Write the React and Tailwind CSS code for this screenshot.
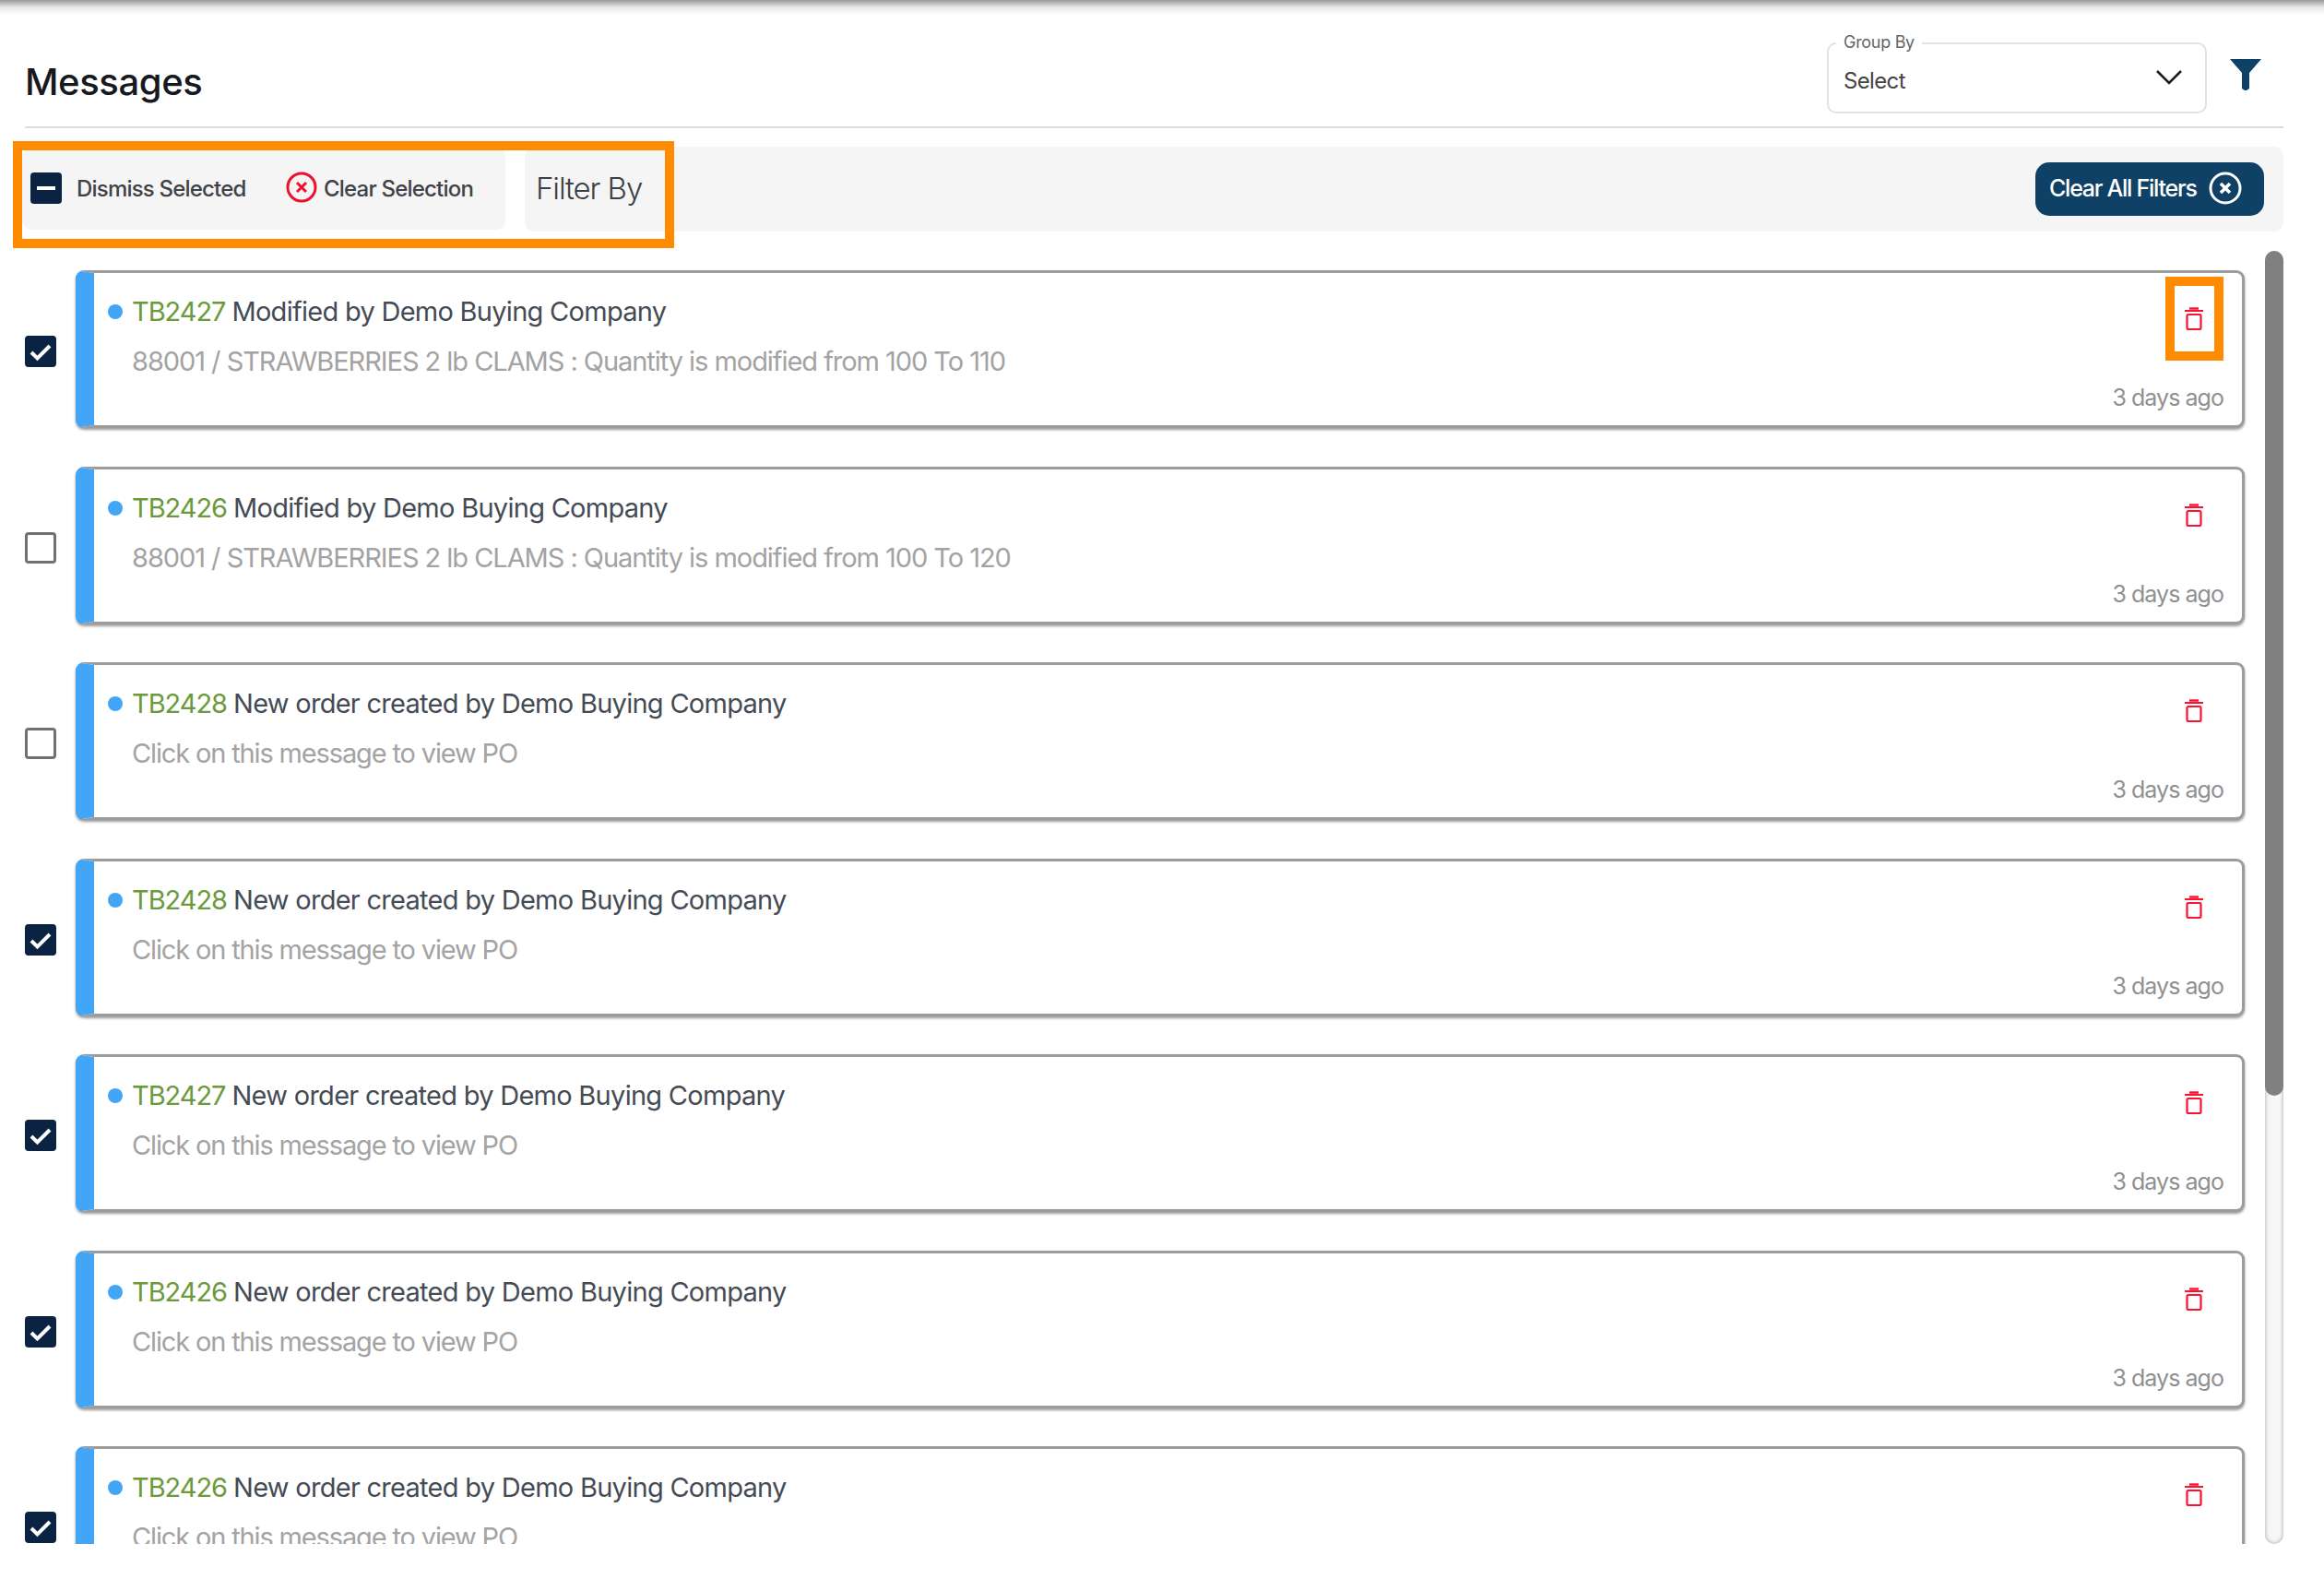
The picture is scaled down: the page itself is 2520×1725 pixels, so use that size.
import React from "react";

function CheckBox({ checked }) {
  if (!checked) {
    return <span className="block w-[34px] h-[34px] rounded-[4px] border-[3px] border-[#707070] bg-white shrink-0 mt-[5px]" />;
  }
  return (
    <span className="flex items-center justify-center w-[34px] h-[34px] rounded-[4px] bg-[#0a2342] shrink-0 mt-[5px]">
      <svg width="28" height="28" viewBox="0 0 28 28" fill="none">
        <path d="M4 15l6.5 6.5L24 8" stroke="#fff" strokeWidth="4" />
      </svg>
    </span>
  );
}

function Trash() {
  return (
    <svg width="20" height="25" viewBox="0 0 20 25" fill="none" className="block">
      <path d="M0 4h20" stroke="#ff1030" strokeWidth="2" />
      <path d="M5 1.5h10" stroke="#ff1030" strokeWidth="2.4" />
      <rect x="2.5" y="8" width="15" height="16" rx="1.5" stroke="#ff1030" strokeWidth="2.2" />
    </svg>
  );
}

function Card({ id, action, sub, mark }) {
  const isClick = sub.startsWith("Click");
  return (
    <div className="relative flex h-[171px] w-[2352px] rounded-[9px] border-[3px] border-l-[20px] border-[#9c9c9c] border-l-[#42a5f5] bg-white shadow-[0_2px_3px_rgba(0,0,0,0.4)]">
      <div className="flex-1 pl-[15px] pt-[22px]">
        <div className="flex items-center h-[40px] text-[29px] text-[#444b55]">
          <span className="w-[16px] h-[16px] rounded-full bg-[#42a5f5] mr-[10px] shrink-0" />
          <span className="text-[#6b9a3c] mr-[7px] tracking-[-1.05px]">{id}</span>
          <span className="tracking-[-0.72px]">{action}</span>
        </div>
        <div className={"ml-[26px] mt-[14px] h-[40px] flex items-center text-[29px] text-[#a3a3a3] whitespace-nowrap " + (isClick ? "tracking-[-1.15px]" : "tracking-[-1.05px]")}>{sub}</div>
      </div>
      <div className="flex flex-col items-end pr-[20px] pt-[37px]">
        <span className="mr-[22px]"><Trash /></span>
        <span className="mt-[55px] text-[25px] tracking-[-0.95px] text-[#909090]">3 days ago</span>
      </div>
      {mark && <span className="absolute left-[2246px] top-[4px] w-[63px] h-[91px] border-[10px] border-[#ff8c00]" />}
    </div>
  );
}

const CLICK = "Click on this message to view PO";
const rows = [
  ["TB2427", "Modified by Demo Buying Company", "88001 / STRAWBERRIES 2 lb CLAMS : Quantity is modified from 100 To 110", true],
  ["TB2426", "Modified by Demo Buying Company", "88001 / STRAWBERRIES 2 lb CLAMS : Quantity is modified from 100 To 120", false],
  ["TB2428", "New order created by Demo Buying Company", CLICK, false],
  ["TB2428", "New order created by Demo Buying Company", CLICK, true],
  ["TB2427", "New order created by Demo Buying Company", CLICK, true],
  ["TB2426", "New order created by Demo Buying Company", CLICK, true],
  ["TB2426", "New order created by Demo Buying Company", CLICK, true],
];

export default function App() {
  return (
    <div className="relative w-[2520px] h-[1725px] bg-white overflow-hidden font-['Inter',sans-serif]">
      <div className="h-[16px] bg-gradient-to-b from-[#9a9a9a] via-[#e8e8e8] to-white" />

      {/* Header */}
      <div className="ml-[27px] mr-[44px] h-[123px] flex items-end justify-between border-b-2 border-[#dcdcdc]">
        <h1 className="mb-[18px] text-[40px] font-medium tracking-[-0.4px] text-[#16191d]">Messages</h1>
        <div className="flex items-start mb-[14px] mr-[24px]">
          <div className="relative w-[412px] h-[77px] rounded-[10px] border-2 border-[#e2e2e2] pl-[16px] pt-[22px] text-[24px] tracking-[-0.65px] text-[#444]">
            <span className="absolute left-[8px] top-[-13px] bg-white px-[8px] text-[18px] leading-[22px] tracking-[-0.3px] text-[#666]">Group By</span>
            Select
            <svg className="absolute left-[354px] top-[27px]" width="30" height="18" viewBox="0 0 30 18" fill="none">
              <path d="M2 2l13 13L28 2" stroke="#1b1b1b" strokeWidth="2.6" />
            </svg>
          </div>
          <svg className="ml-[25px] mt-[18px]" width="34" height="34" viewBox="0 0 34 34">
            <path d="M0 0h34L21 15v17l-3 2h-2l-3-2V15z" fill="#0f4166" />
          </svg>
        </div>
      </div>

      {/* Filter bar */}
      <div className="ml-[24px] mr-[44px] mt-[20px] flex items-start gap-[21px]">
        <div className="w-[524px] h-[90px] rounded-[10px] bg-[#f5f5f5] flex items-center pl-[9px] pt-[2px] text-[24px] font-medium tracking-[-0.8px] text-[#3f4348]">
          <span className="flex items-center justify-center w-[34px] h-[34px] rounded-[4px] bg-[#0a2342] shrink-0 -mt-[2px]">
            <span className="block w-[20px] h-[4px] bg-white" />
          </span>
          <span className="ml-[16px] w-[227px] whitespace-nowrap">Dismiss Selected</span>
          <svg width="34" height="34" viewBox="0 0 34 34" fill="none" className="shrink-0 -mt-[4px]">
            <circle cx="17" cy="17" r="15" stroke="#ef1030" strokeWidth="3" />
            <path d="M12 12l10 10M22 12L12 22" stroke="#ef1030" strokeWidth="3" />
          </svg>
          <span className="ml-[7px] whitespace-nowrap">Clear Selection</span>
        </div>
        <div className="flex-1 h-[92px] rounded-[10px] bg-[#f5f5f5] flex items-center justify-between pl-[12px] pr-[21px]">
          <span className="text-[33px] font-light tracking-[-1.1px] text-[#3c4045]">Filter By</span>
          <button className="flex items-center w-[248px] h-[58px] rounded-[15px] bg-[#0f4166] pl-[15px] text-[25px] font-medium tracking-[-1.25px] text-white">
            <span className="w-[173px] text-left whitespace-nowrap">Clear All Filters</span>
            <svg width="36" height="36" viewBox="0 0 36 36" fill="none" className="-mt-[2px]">
              <circle cx="18" cy="18" r="16" stroke="#fff" strokeWidth="3" />
              <path d="M13 13l10 10M23 13L13 23" stroke="#fff" strokeWidth="3.6" />
            </svg>
          </button>
        </div>
      </div>

      {/* List */}
      <div className="mt-[21px] ml-[27px] mr-[44px] h-[1402px] flex justify-between overflow-hidden">
        <div className="pt-[21px] flex flex-col gap-[41.5px]">
          {rows.map((r, i) => (
            <div key={i} className="flex items-center gap-[21px]">
              <CheckBox checked={r[3]} />
              <Card id={r[0]} action={r[1]} sub={r[2]} mark={i === 0} />
            </div>
          ))}
        </div>
        <div className="w-[20px] h-full rounded-full bg-[#f6f6f6] shadow-[inset_0_0_4px_rgba(0,0,0,0.35)]">
          <div className="h-[916px] rounded-full bg-[#808080]" />
        </div>
      </div>

      {/* Annotation highlight */}
      <div className="absolute left-[14px] top-[153px] w-[717px] h-[116px] border-[10px] border-[#ff8c00]" />
    </div>
  );
}
